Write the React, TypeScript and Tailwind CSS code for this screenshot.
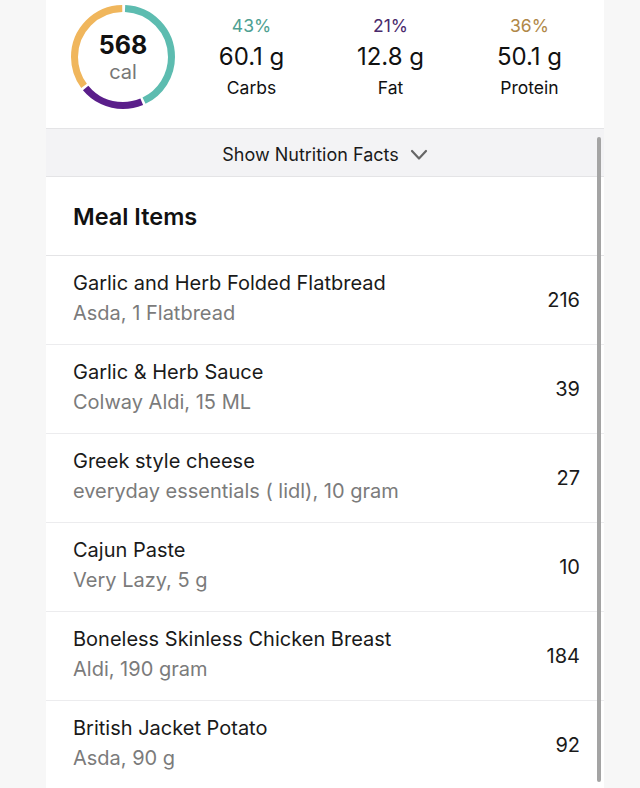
import React from "react";

type Macro = {
  pct: string;
  grams: string;
  label: string;
  pctClass: string;
};

type MealItem = {
  name: string;
  detail: string;
  cal: number;
};

const MACROS: Macro[] = [
  { pct: "43%", grams: "60.1 g", label: "Carbs", pctClass: "text-[#4e9f92]" },
  { pct: "21%", grams: "12.8 g", label: "Fat", pctClass: "text-[#4a2a6c]" },
  { pct: "36%", grams: "50.1 g", label: "Protein", pctClass: "text-[#b08848]" },
];

const ITEMS: MealItem[] = [
  { name: "Garlic and Herb Folded Flatbread", detail: "Asda, 1 Flatbread", cal: 216 },
  { name: "Garlic & Herb Sauce", detail: "Colway Aldi, 15 ML", cal: 39 },
  { name: "Greek style cheese", detail: "everyday essentials ( lidl), 10 gram", cal: 27 },
  { name: "Cajun Paste", detail: "Very Lazy, 5 g", cal: 10 },
  { name: "Boneless Skinless Chicken Breast", detail: "Aldi, 190 gram", cal: 184 },
  { name: "British Jacket Potato", detail: "Asda, 90 g", cal: 92 },
];

const R = 48.5;
const C = 2 * Math.PI * R;

// arcs in degrees, clockwise from 12 o'clock
const ARCS = [
  { from: 2.5, to: 154, color: "#5dbcb0" },
  { from: 157, to: 230, color: "#5a1e8a" },
  { from: 233, to: 358.5, color: "#f0b65c" },
];

function Ring() {
  return (
    <div className="relative h-[104px] w-[104px] shrink-0">
      <svg width="104" height="104" viewBox="0 0 104 104" className="absolute inset-0">
        <g transform="rotate(-90 52 52)">
          {ARCS.map((arc) => {
            const len = ((arc.to - arc.from) / 360) * C;
            const off = (arc.from / 360) * C;
            return (
              <circle
                key={arc.color}
                cx="52"
                cy="52"
                r={R}
                fill="none"
                stroke={arc.color}
                strokeWidth="7"
                strokeDasharray={`${len} ${C}`}
                strokeDashoffset={-off}
              />
            );
          })}
        </g>
      </svg>
      <div className="absolute inset-0 flex flex-col items-center justify-center">
        <span className="text-[25px] font-bold leading-[30px] text-[#111]">568</span>
        <span className="text-[20px] leading-[25px] text-[#777]">cal</span>
      </div>
    </div>
  );
}

export default function App() {
  return (
    <div
      className="h-[788px] w-[640px] overflow-hidden bg-[#f7f7f7]"
      style={{ fontFamily: "Inter, 'Noto Sans', sans-serif" }}
    >
      <div className="relative ml-[46px] w-[558px] bg-white">
        <div className="flex h-[129px] items-center border-b border-[#e4e4e6] pl-[25px] pb-[14px]">
          <Ring />
          <div className="ml-[7px] flex">
            {MACROS.map((m) => (
              <div key={m.label} className="flex w-[139px] flex-col items-center">
                <span className={`text-[17.5px] leading-[22px] ${m.pctClass}`}>{m.pct}</span>
                <span className="mt-[5px] text-[24px] leading-[30px] text-[#111]">{m.grams}</span>
                <span className="mt-[4px] text-[17.5px] leading-[24px] text-[#111]">{m.label}</span>
              </div>
            ))}
          </div>
        </div>

        <div className="flex h-[48px] items-center justify-center gap-[11px] border-b border-[#e4e4e6] bg-[#f3f3f5] pt-[3px]">
          <span className="text-[18px] text-[#1a1a1a]">Show Nutrition Facts</span>
          <svg width="18" height="12" viewBox="0 0 18 12" className="mt-[1px]">
            <path d="M2 2 L9 9.5 L16 2" fill="none" stroke="#666" strokeWidth="2.2" strokeLinecap="round" strokeLinejoin="round" />
          </svg>
        </div>

        <div className="flex h-[79px] items-center border-b border-[#e4e4e6] pl-[27px] pt-[2px]">
          <span className="text-[23.5px] font-semibold text-[#111]">Meal Items</span>
        </div>

        {ITEMS.map((item) => (
          <div
            key={item.name}
            className="flex h-[89px] items-center justify-between border-b border-[#ececee] pl-[27px] pr-[24px]"
          >
            <div className="flex flex-col pb-[5px]">
              <span className="text-[20px] leading-[30px] text-[#1a1a1a]">{item.name}</span>
              <span className="text-[20px] leading-[30px] text-[#7b7b7b]">{item.detail}</span>
            </div>
            <span className="text-[20px] text-[#1a1a1a]">{item.cal}</span>
          </div>
        ))}

        <div className="absolute left-[551px] top-[137px] h-[645px] w-[4px] rounded-full bg-[#a4a4a4]" />
      </div>
    </div>
  );
}
